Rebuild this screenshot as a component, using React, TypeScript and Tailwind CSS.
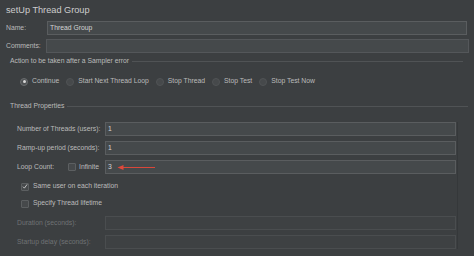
import React from "react";

const font = { fontFamily: '"Liberation Sans", Arial, sans-serif' };

function Field({ value, disabled }: { value?: string; disabled?: boolean }) {
  return (
    <div
      className={
        "h-[14px] w-[351px] border flex items-center pl-[2px] text-[6.8px] text-[#d4d4d4] " +
        (disabled ? "border-[#4a4d4f] bg-[#3e4143]" : "border-[#5a5d5f] bg-[#45494b]")
      }
    >
      {value}
    </div>
  );
}

function Radio({ checked, label }: { checked?: boolean; label: string }) {
  return (
    <div className="flex items-center gap-[4px]">
      <div
        className={
          "w-[8px] h-[8px] rounded-full flex items-center justify-center border " +
          (checked ? "border-[#6a6d6f] bg-[#4e5153]" : "border-[#505355] bg-[#46494b]")
        }
      >
        {checked && <div className="w-[3px] h-[3px] rounded-full bg-[#d8d8d8]" />}
      </div>
      <span>{label}</span>
    </div>
  );
}

function Check({ checked }: { checked?: boolean }) {
  return (
    <div className="w-[8px] h-[8px] rounded-[1px] border border-[#5c5f61] bg-[#46494b] flex items-center justify-center">
      {checked && (
        <svg width="7" height="7" viewBox="0 0 8 8">
          <path d="M1.3 4.2 L3.2 6.2 L6.8 1.2" stroke="#dcdcdc" strokeWidth="1.1" fill="none" />
        </svg>
      )}
    </div>
  );
}

export default function App() {
  return (
    <div
      style={font}
      className="w-[474px] h-[256px] bg-[#3c3f41] text-[#bbbbbb] text-[6.8px] overflow-hidden flex flex-col"
    >
      <div className="h-[21px] pt-[1px] pl-[6px] flex items-center text-[9.2px] text-[#cdcdcd]">
        setUp Thread Group
      </div>
      <div className="h-[14px] flex items-center">
        <span className="w-[47px] pl-[6px]">Name:</span>
        <div className="h-[14px] w-[420px] border border-[#5a5d5f] bg-[#45494b] flex items-center pl-[2px] text-[#d4d4d4]">
          Thread Group
        </div>
      </div>
      <div className="mt-[4px] h-[14px] flex items-center">
        <span className="w-[46px] pl-[6px]">Comments:</span>
        <div className="h-[14px] w-[423px] border border-[#54575a] bg-[#45494b]" />
      </div>
      <div className="mt-[2px] h-[12px] flex items-center pl-[10px]">
        <span>Action to be taken after a Sampler error</span>
        <div className="ml-[3px] w-[331px] h-px bg-[#505355]" />
      </div>
      <div className="mt-[8px] h-[13px] flex items-center pl-[20px] gap-[7px]">
        <Radio checked label="Continue" />
        <Radio label="Start Next Thread Loop" />
        <Radio label="Stop Thread" />
        <Radio label="Stop Test" />
        <Radio label="Stop Test Now" />
      </div>
      <div className="mt-[12px] h-[12px] flex items-center pl-[10px]">
        <span>Thread Properties</span>
        <div className="ml-[3px] w-[401px] h-px bg-[#505355]" />
      </div>
      <div className="mt-[10px] flex">
        <div className="flex flex-col">
          <div className="h-[14px] flex items-center">
            <span className="w-[105px] pl-[17px]">Number of Threads (users):</span>
            <Field value="1" />
          </div>
          <div className="mt-[5px] h-[14px] flex items-center">
            <span className="w-[105px] pl-[17px]">Ramp-up period (seconds):</span>
            <Field value="1" />
          </div>
          <div className="mt-[5px] h-[14px] flex items-center">
            <div className="w-[105px] pl-[17px] flex items-center">
              <span className="w-[51px]">Loop Count:</span>
              <Check />
              <span className="ml-[3px]">Infinite</span>
            </div>
            <div className="relative">
              <Field value="3" />
              <svg
                className="absolute left-[12px] top-[4px]"
                width="40"
                height="7"
                viewBox="0 0 40 7"
              >
                <line x1="5" y1="3.5" x2="38" y2="3.5" stroke="#d9473a" strokeWidth="1.2" />
                <path d="M0.5 3.5 L6.5 1 L6.5 6 Z" fill="#e0493b" />
              </svg>
            </div>
          </div>
          <div className="mt-[6px] h-[13px] flex items-center pl-[21px] gap-[4px]">
            <Check checked />
            <span>Same user on each iteration</span>
          </div>
          <div className="mt-[4px] h-[13px] flex items-center pl-[21px] gap-[4px]">
            <Check />
            <span>Specify Thread lifetime</span>
          </div>
          <div className="mt-[6px] h-[14px] flex items-center text-[#6f7274]">
            <span className="w-[105px] pl-[17px]">Duration (seconds):</span>
            <Field disabled />
          </div>
          <div className="mt-[5px] h-[14px] flex items-center text-[#6f7274]">
            <span className="w-[105px] pl-[17px]">Startup delay (seconds):</span>
            <Field disabled />
          </div>
        </div>
        <div className="ml-[1px] w-px bg-[#35383a]" />
      </div>
    </div>
  );
}
